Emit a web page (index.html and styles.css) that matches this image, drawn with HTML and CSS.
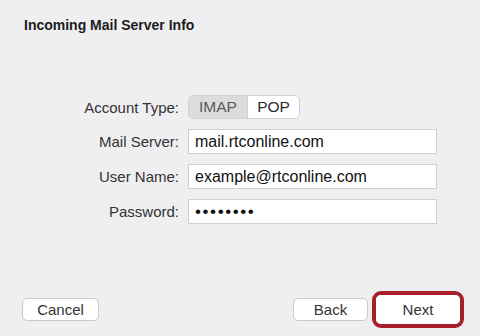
FILE: index.html
```html
<!DOCTYPE html>
<html>
<head>
<meta charset="utf-8">
<link rel="stylesheet" href="styles.css">
</head>
<body>
<div class="sheet">
  <h1 class="title">Incoming Mail Server Info</h1>
  <div class="form">
    <label class="lbl">Account Type:</label>
    <div class="seg">
      <span class="seg-item seg-on">IMAP</span>
      <span class="seg-item">POP</span>
    </div>
    <label class="lbl">Mail Server:</label>
    <div class="field">mail.rtconline.com</div>
    <label class="lbl">User Name:</label>
    <div class="field">example@rtconline.com</div>
    <label class="lbl">Password:</label>
    <div class="field pw">&#8226;&#8226;&#8226;&#8226;&#8226;&#8226;&#8226;&#8226;</div>
  </div>
  <div class="buttons">
    <button class="btn btn-cancel">Cancel</button>
    <div class="spacer"></div>
    <button class="btn btn-back">Back</button>
    <div class="ring"><button class="btn btn-next">Next</button></div>
  </div>
</div>
</body>
</html>
```

FILE: styles.css
```css
html, body {
  margin: 0;
  padding: 0;
  background: #efeff1;
}
.sheet {
  width: 480px;
  height: 336px;
  display: flex;
  flex-direction: column;
  font-family: "Liberation Sans", Arial, sans-serif;
  box-sizing: border-box;
}
.title {
  margin: 0;
  padding: 17px 0 0 24px;
  font-size: 14px;
  font-weight: bold;
  color: #1c1c1c;
  line-height: 16px;
}
.form {
  margin-top: 62px;
  display: grid;
  grid-template-columns: 179px 249px;
  column-gap: 9px;
  row-gap: 10px;
  align-items: center;
}
.lbl {
  text-align: right;
  font-size: 15px;
  color: #333;
}
.seg {
  justify-self: start;
  display: flex;
  height: 24px;
  width: 112px;
  box-sizing: border-box;
  border: 1px solid #d0d0d0;
  border-radius: 5px;
  overflow: hidden;
  background: #fff;
}
.seg-item {
  display: flex;
  align-items: center;
  justify-content: center;
  font-size: 15.5px;
  color: #2c2c2c;
  flex: 1;
}
.seg-item.seg-on {
  flex: 0 0 58px;
  background: #dcdcdd;
  color: #5a5a5a;
  border-right: 1px solid #cfcfcf;
}
.field {
  height: 25px;
  box-sizing: border-box;
  border: 1px solid #cfcfcf;
  background: #fff;
  font-size: 16px;
  color: #111;
  padding: 0 0 0 6px;
  display: flex;
  align-items: center;
}
.field.pw {
  font-size: 17px;
  letter-spacing: 1.6px;
}
.buttons {
  margin-top: auto;
  display: flex;
  align-items: center;
  padding: 0 16px 8px 22px;
}
.spacer { flex: 1; }
.btn {
  font-family: "Liberation Sans", Arial, sans-serif;
  font-size: 15px;
  color: #333;
  background: #fff;
  border: 1px solid #c9c9c9;
  border-radius: 5px;
  height: 23px;
  padding: 0;
  box-sizing: border-box;
}
.btn-cancel { width: 77px; }
.btn-back { width: 75px; }
.ring {
  margin-left: 4px;
  border: 4px solid #a61f2b;
  border-radius: 9px;
  padding: 0;
  display: flex;
}
.btn-next {
  width: 84px;
  height: 29px;
  border: none;
  border-radius: 5px;
}
```
